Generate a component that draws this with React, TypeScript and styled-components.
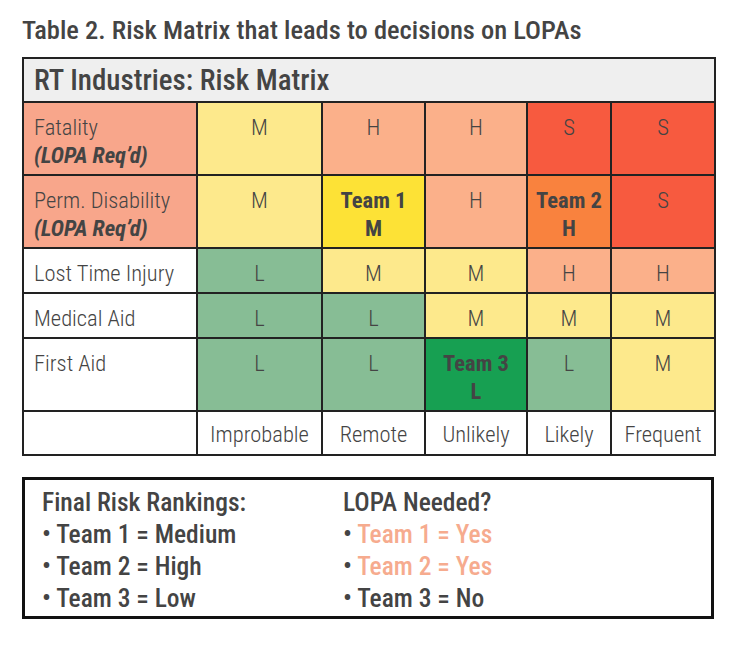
import React from "react";
import styled, { createGlobalStyle } from "styled-components";

const FONT = `"Roboto Condensed", "DejaVu Sans Condensed", "Liberation Sans Narrow", Roboto, sans-serif`;

const Global = createGlobalStyle`
  html, body { margin: 0; padding: 0; background: #fff; }
  body { font-family: ${FONT}; color: #444; }
`;

const Page = styled.div`
  width: 739px;
  height: 653px;
  padding: 15px 25px 0 22px;
  box-sizing: border-box;
  display: flex;
  flex-direction: column;
`;

const Title = styled.h1`
  margin: 0 0 12px 0;
  font-size: 26.5px;
  line-height: 30px;
  font-weight: 500;
  color: #444;
`;

const Table = styled.table`
  width: 692px;
  border-collapse: collapse;
  table-layout: fixed;
  border: 2px solid #222;
`;

const HeadCell = styled.th`
  background: #efefef;
  border: 2px solid #222;
  text-align: left;
  font-size: 29px;
  font-weight: 500;
  height: 42px;
  padding: 0 0 0 10px;
  color: #444;
`;

const Cell = styled.td<{ $bg: string; $bold?: boolean }>`
  background: ${(p) => p.$bg};
  border: 2px solid #222;
  text-align: center;
  vertical-align: top;
  padding: 10px 0 5px 0;
  font-size: 22.5px;
  line-height: 28px;
  font-weight: ${(p) => (p.$bold ? 700 : 300)};
  color: #444;
`;

const Label = styled.td<{ $bg?: string }>`
  background: ${(p) => p.$bg ?? "#fff"};
  border: 2px solid #222;
  text-align: left;
  vertical-align: top;
  padding: 10px 0 5px 10px;
  font-size: 22.5px;
  line-height: 28px;
  font-weight: 300;
  color: #444;
`;

const Req = styled.span`
  display: block;
  font-style: italic;
  font-weight: 700;
`;

const Axis = styled.td`
  background: #fff;
  border: 2px solid #222;
  text-align: center;
  padding: 8px 0 6px 0;
  font-size: 22.5px;
  line-height: 28px;
  font-weight: 300;
  color: #444;
`;

const Summary = styled.div`
  margin-top: 21px;
  width: 692px;
  box-sizing: border-box;
  border: 3px solid #111;
  padding: 6px 0 2px 17px;
  display: grid;
  grid-template-columns: 301px 1fr;
`;

const List = styled.div`
  display: flex;
  flex-direction: column;
`;

const Line = styled.div<{ $accent?: boolean }>`
  font-size: 25.5px;
  line-height: 32px;
  font-weight: 500;
  color: #444;
  & > span {
    color: ${(p) => (p.$accent ? "#f6ab8e" : "#444")};
  }
`;

const C = {
  fatal: "#f8a68b",
  M: "#fde98c",
  H: "#fbb08a",
  S: "#f75a3f",
  L: "#87bd95",
  t1: "#fde236",
  t2: "#f9823e",
  t3: "#17a052",
};

type Val = { t: string; bg: string; bold?: boolean };
const rows: { label: React.ReactNode; bg?: string; cells: Val[] }[] = [
  {
    label: (
      <>
        Fatality<Req>(LOPA Req’d)</Req>
      </>
    ),
    bg: C.fatal,
    cells: [
      { t: "M", bg: C.M },
      { t: "H", bg: C.H },
      { t: "H", bg: C.H },
      { t: "S", bg: C.S },
      { t: "S", bg: C.S },
    ],
  },
  {
    label: (
      <>
        Perm. Disability<Req>(LOPA Req’d)</Req>
      </>
    ),
    bg: C.fatal,
    cells: [
      { t: "M", bg: C.M },
      { t: "Team 1\nM", bg: C.t1, bold: true },
      { t: "H", bg: C.H },
      { t: "Team 2\nH", bg: C.t2, bold: true },
      { t: "S", bg: C.S },
    ],
  },
  {
    label: "Lost Time Injury",
    cells: [
      { t: "L", bg: C.L },
      { t: "M", bg: C.M },
      { t: "M", bg: C.M },
      { t: "H", bg: C.H },
      { t: "H", bg: C.H },
    ],
  },
  {
    label: "Medical Aid",
    cells: [
      { t: "L", bg: C.L },
      { t: "L", bg: C.L },
      { t: "M", bg: C.M },
      { t: "M", bg: C.M },
      { t: "M", bg: C.M },
    ],
  },
  {
    label: (
      <>
        First Aid
        <br />
        &nbsp;
      </>
    ),
    cells: [
      { t: "L", bg: C.L },
      { t: "L", bg: C.L },
      { t: "Team 3\nL", bg: C.t3, bold: true },
      { t: "L", bg: C.L },
      { t: "M", bg: C.M },
    ],
  },
];

const widths = [174, 125, 103, 102, 84, 104];
const axis = ["Improbable", "Remote", "Unlikely", "Likely", "Frequent"];

export default function App() {
  return (
    <>
      <Global />
      <Page>
        <Title>Table 2. Risk Matrix that leads to decisions on LOPAs</Title>
        <Table>
          <colgroup>
            {widths.map((w, i) => (
              <col key={i} style={{ width: w }} />
            ))}
          </colgroup>
          <thead>
            <tr>
              <HeadCell colSpan={6}>RT Industries: Risk Matrix</HeadCell>
            </tr>
          </thead>
          <tbody>
            {rows.map((r, i) => (
              <tr key={i}>
                <Label $bg={r.bg}>{r.label}</Label>
                {r.cells.map((c, j) => (
                  <Cell key={j} $bg={c.bg} $bold={c.bold}>
                    {c.t.split("\n").map((s, k) => (
                      <div key={k}>{s}</div>
                    ))}
                  </Cell>
                ))}
              </tr>
            ))}
            <tr>
              <Axis />
              {axis.map((a) => (
                <Axis key={a}>{a}</Axis>
              ))}
            </tr>
          </tbody>
        </Table>
        <Summary>
          <List>
            <Line>Final Risk Rankings:</Line>
            <Line>• Team 1 = Medium</Line>
            <Line>• Team 2 = High</Line>
            <Line>• Team 3 = Low</Line>
          </List>
          <List>
            <Line>LOPA Needed?</Line>
            <Line $accent>
              • <span>Team 1 = Yes</span>
            </Line>
            <Line $accent>
              • <span>Team 2 = Yes</span>
            </Line>
            <Line>• Team 3 = No</Line>
          </List>
        </Summary>
      </Page>
    </>
  );
}
